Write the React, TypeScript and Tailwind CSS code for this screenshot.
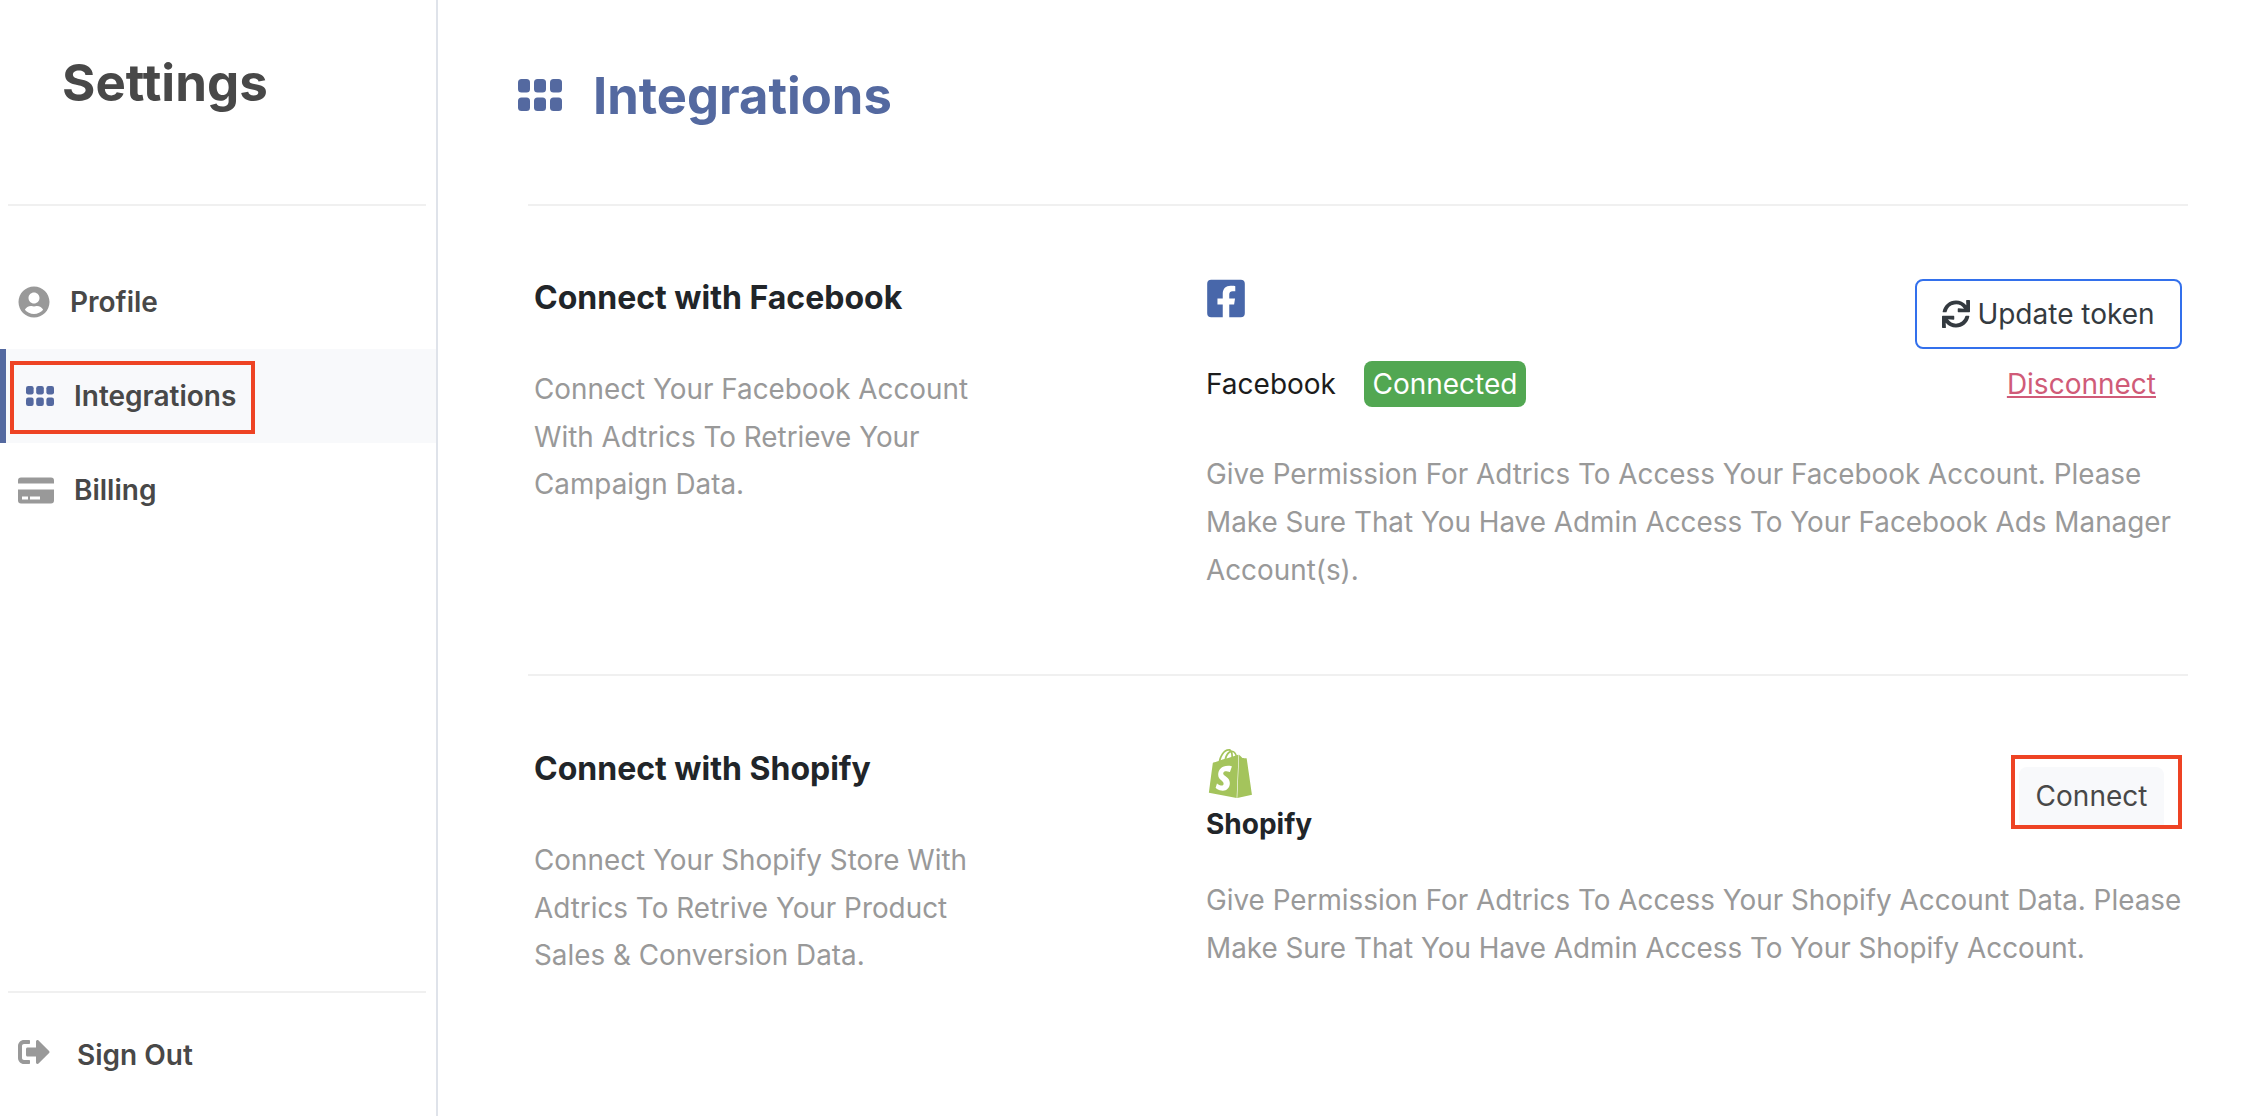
import { FaUserCircle, FaSignOutAlt, FaFacebookSquare, FaSync } from "react-icons/fa";
import { SiShopify } from "react-icons/si";

function Grid({ className }: { className: string }) {
  const cells = [0, 1, 2];
  return (
    <svg viewBox="0 0 44 32" className={className} fill="currentColor" preserveAspectRatio="none">
      {cells.map((i) => (
        <g key={i}>
          <rect x={i * 16} y="0" width="12" height="13.5" rx="3.5" />
          <rect x={i * 16} y="18.5" width="12" height="13.5" rx="3.5" />
        </g>
      ))}
    </svg>
  );
}

function Card({ className }: { className: string }) {
  return (
    <svg viewBox="0 0 36 26" className={className} fill="currentColor">
      <path d="M3 0h30a3 3 0 0 1 3 3v3H0V3a3 3 0 0 1 3-3Z" />
      <path fillRule="evenodd" d="M0 12h36v11a3 3 0 0 1-3 3H3a3 3 0 0 1-3-3V12Zm4 7v3h6v-3H4Zm8 0v3h10v-3H12Z" />
    </svg>
  );
}

function Section({
  title,
  desc,
  children,
}: {
  title: string;
  desc: string[];
  children: React.ReactNode;
}) {
  return (
    <section className="flex">
      <div className="w-[678px] pl-[6px] shrink-0">
        <h2 className="text-[32px] leading-[40px] font-bold text-[#212529] mt-[72px]">{title}</h2>
        <p className="mt-[48px] text-[27.85px] leading-[47.6px] text-[#999999]">
          {desc.map((l) => (
            <span key={l} className="block">{l}</span>
          ))}
        </p>
      </div>
      <div className="flex-1">{children}</div>
    </section>
  );
}

export default function App() {
  return (
    <div className="flex h-[1116px] bg-white overflow-hidden font-['Inter',sans-serif]">
      <aside className="w-[438px] shrink-0 border-r-2 border-[#dfe3ea] flex flex-col">
        <div className="h-[204px] pl-[62px] pt-[53px]">
          <h1 className="text-[51px] leading-[60px] font-bold text-[#484848]">Settings</h1>
        </div>
        <div className="h-[2px] ml-[8px] mr-[10px] bg-[#f0f0f0]" />
        <nav className="mt-[49px] flex flex-col text-[28px] font-semibold text-[#484848]">
          <a className="h-[94px] flex items-center pl-[18px]">
            <FaUserCircle className="w-[32px] h-[32px] text-[#999999]" />
            <span className="ml-[20px]">Profile</span>
          </a>
          <a className="relative h-[94px] flex items-center pl-[26px] bg-[#f8f9fb]">
            <span className="absolute left-0 top-0 bottom-0 w-[6px] bg-[#5469a0]" />
            <span className="absolute left-[10px] top-[12px] w-[245px] h-[73px] border-4 border-[#ee4324]" />
            <Grid className="w-[28px] h-[20px] text-[#5469a0]" />
            <span className="ml-[20px]">Integrations</span>
          </a>
          <a className="h-[94px] flex items-center pl-[18px]">
            <Card className="w-[36px] h-[27px] text-[#999999]" />
            <span className="ml-[20px]">Billing</span>
          </a>
        </nav>
        <div className="mt-auto">
          <div className="h-[2px] ml-[8px] mr-[10px] bg-[#f0f0f0]" />
          <a className="h-[123px] flex items-center pl-[18px] text-[28px] font-semibold text-[#484848]">
            <FaSignOutAlt className="w-[32px] h-[32px] text-[#999999] -mt-[6px]" />
            <span className="ml-[27px]">Sign Out</span>
          </a>
        </div>
      </aside>

      <main className="flex-1 pl-[90px] pr-[76px]">
        <div className="h-[204px] -ml-[10px] flex items-start pt-[64px]">
          <Grid className="w-[44px] h-[32px] mt-[15px] text-[#5469a0]" />
          <h1 className="ml-[31px] text-[50.7px] leading-[64px] font-bold text-[#5469a0]">Integrations</h1>
        </div>
        <div className="h-[2px] bg-[#f0f0f0]" />

        <div className="h-[468px]">
          <Section
            title="Connect with Facebook"
            desc={["Connect Your Facebook Account", "With Adtrics To Retrieve Your", "Campaign Data."]}
          >
            <div className="flex justify-between pt-[73px] pr-[6px]">
              <FaFacebookSquare className="w-[38px] h-[43px] ml-[1px] -mt-[2px] text-[#4867aa]" />
              <button className="h-[70px] w-[267px] border-2 border-[#3370ec] rounded-[8px] flex items-center justify-center text-[28px] text-[#343a40]">
                <FaSync className="w-[28px] h-[28px] mr-[7px]" />
                Update token
              </button>
            </div>
            <div className="flex items-center justify-between mt-[12px] pr-[32px]">
              <div className="flex items-center">
                <span className="text-[28px] text-[#1c1c1c]">Facebook</span>
                <span className="ml-[28px] h-[46px] w-[162px] bg-[#52a752] rounded-[8px] flex items-center justify-center text-[28px] text-white">Connected</span>
              </div>
              <a className="text-[28px] text-[#d05b78] underline">Disconnect</a>
            </div>
            <p className="mt-[44px] text-[27.85px] leading-[47.8px] text-[#999999] whitespace-nowrap">
              <span className="block">Give Permission For Adtrics To Access Your Facebook Account. Please</span>
              <span className="block">Make Sure That You Have Admin Access To Your Facebook Ads Manager</span>
              <span className="block">Account(s).</span>
            </p>
          </Section>
        </div>
        <div className="h-[2px] bg-[#f0f0f0]" />

        <div className="pt-[1px]">
          <Section
            title="Connect with Shopify"
            desc={["Connect Your Shopify Store With", "Adtrics To Retrive Your Product", "Sales & Conversion Data."]}
          >
            <div className="flex justify-between pt-[72px] pr-[6px]">
              <div>
                <SiShopify className="w-[49px] h-[49px] text-[#a4c45c]" />
                <div className="mt-[10px] text-[28px] leading-[32px] font-bold text-[#212529]">Shopify</div>
              </div>
              <div className="relative w-[171px] h-[74px] mt-[6px] border-4 border-[#ee4324]">
                <button className="absolute left-[4px] top-[8px] right-[14px] bottom-0 bg-[#f8f9fb] rounded-t-[8px] text-[28px] text-[#484848]">Connect</button>
              </div>
            </div>
            <p className="mt-[37px] text-[27.85px] leading-[47.8px] text-[#999999] whitespace-nowrap">
              <span className="block">Give Permission For Adtrics To Access Your Shopify Account Data. Please</span>
              <span className="block">Make Sure That You Have Admin Access To Your Shopify Account.</span>
            </p>
          </Section>
        </div>
      </main>
    </div>
  );
}
